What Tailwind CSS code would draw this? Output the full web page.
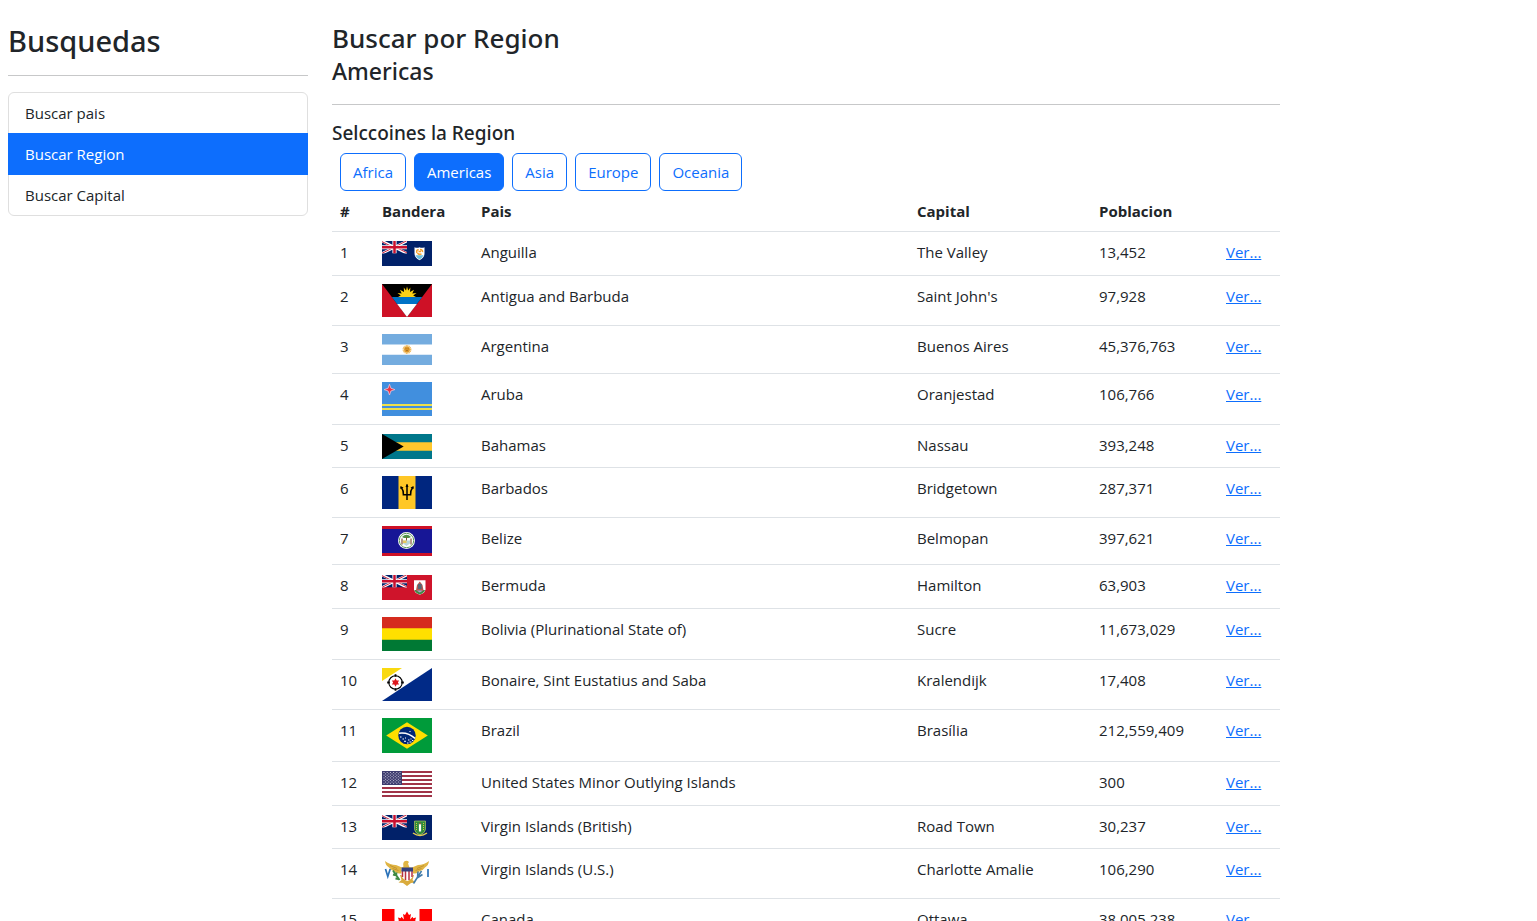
<!DOCTYPE html>
<html lang="es">
  <head>
    <meta charset="UTF-8" />
    <meta name="viewport" content="width=device-width, initial-scale=1.0" />
    <title>Paises</title>
    <script src="https://cdn.jsdelivr.net/npm/@tailwindcss/browser@4"></script>
  </head>
  <body class="bg-white text-[#212529] text-[15px] leading-6 font-['Open_Sans',sans-serif]">
    <!-- Shared shapes for the flags -->
    <svg class="hidden">
      <symbol id="union-jack" viewBox="0 0 60 30">
        <path d="M0 0h60v30H0z" fill="#012169" />
        <path d="M0 0l60 30M60 0L0 30" stroke="#fff" stroke-width="6" />
        <path d="M0 1.5L29 16M31 14L60 28.5M60 -1L31 14M29 15L0 29.5" stroke="#c8102e" stroke-width="2.2" />
        <path d="M30 0v30M0 15h60" stroke="#fff" stroke-width="10" />
        <path d="M30 0v30M0 15h60" stroke="#c8102e" stroke-width="6" />
      </symbol>
    </svg>

    <div class="max-w-[1280px] grid grid-cols-12 gap-6 pt-[22px] pl-2">
      <!-- Sidebar -->
      <aside class="col-span-3">
        <h1 class="text-[29px] leading-[37px] font-medium font-['Noto_Sans',sans-serif]">Busquedas</h1>
        <hr class="my-4 border-[#c7c8c9]" />
        <nav class="flex flex-col rounded-md border border-[#dfdfdf]">
          <a href="#" class="px-4 py-2">Buscar pais</a>
          <a href="#" class="-mx-px px-[17px] py-[9px] bg-[#0d6efd] text-white" aria-current="page">Buscar Region</a>
          <a href="#" class="px-4 py-2">Buscar Capital</a>
        </nav>
      </aside>

      <!-- Content -->
      <main class="col-span-9">
        <h2 class="text-[26px] leading-[33px] font-medium font-['Noto_Sans',sans-serif]">
          Buscar por Region
          <span class="block text-[23px]">Americas</span>
        </h2>
        <hr class="my-4 border-[#c7c8c9]" />

        <h3 class="text-[19px] leading-6 mb-2 font-medium font-['Noto_Sans',sans-serif]">Selccoines la Region</h3>
        <div class="flex gap-2 pl-2">
          <button type="button" class="rounded-md border border-[#0d6efd] px-3 py-1.5 text-[#0d6efd]">Africa</button>
          <button type="button" class="rounded-md border border-[#0d6efd] px-3 py-1.5 bg-[#0d6efd] text-white">Americas</button>
          <button type="button" class="rounded-md border border-[#0d6efd] px-3 py-1.5 text-[#0d6efd]">Asia</button>
          <button type="button" class="rounded-md border border-[#0d6efd] px-3 py-1.5 text-[#0d6efd]">Europe</button>
          <button type="button" class="rounded-md border border-[#0d6efd] px-3 py-1.5 text-[#0d6efd]">Oceania</button>
        </div>

        <table class="w-full table-fixed text-left align-top [&_th]:p-2 [&_td]:p-2 [&_td]:align-top [&_tr]:border-b [&_tr]:border-[#dee2e6] [&_a]:text-[#0d6efd] [&_a]:underline [&_svg]:inline-block [&_svg]:w-[50px] [&_svg]:align-middle">
          <thead>
            <tr>
              <th class="w-[42px]">#</th>
              <th class="w-[99px]">Bandera</th>
              <th>Pais</th>
              <th class="w-[182px]">Capital</th>
              <th class="w-[127px]">Poblacion</th>
              <th class="w-[62px]"></th>
            </tr>
          </thead>
          <tbody>
            <tr class="h-11">
              <td>1</td>
              <td>
                <svg class="h-[25px]" viewBox="0 0 50 25" role="img" aria-label="Anguilla">
                  <path d="M0 0h50v25H0z" fill="#012169" />
                  <use href="#union-jack" width="25" height="12.5" />
                  <path d="M32.5 6.3q2.5 1 5 0q2.500 1 5 0v6q0 4.500-5 7q-5-2.500-5-7z" fill="#fff" />
                  <path d="M33.400 14.300h8.200q-1.300 2.700-4.100 4.200q-2.800-1.500-4.100-4.200z" fill="#6bbfdf" />
                  <path d="M35 12q-1-3.500 1.700-3.300M38 8.500q3 0 2.400 2.700M39.500 12.800q-2.700 1.400-4-.6M36.500 10.500h2.500" fill="none" stroke="#f5a02c" stroke-width="1.500" />
                </svg>
              </td>
              <td>Anguilla</td>
              <td>The Valley</td>
              <td>13,452</td>
              <td><a href="#">Ver...</a></td>
            </tr>
            <tr>
              <td>2</td>
              <td>
                <svg class="h-[33px]" viewBox="0 0 50 33" role="img" aria-label="Antigua and Barbuda">
                  <path d="M0 0h50v33H0z" fill="#ce1126" />
                  <path d="M0 0h50L25 33z" fill="#000" />
                  <path d="M16 13l2.800-1.500L15.500 9l4.200.6L18 5.800l4 2.200-.2-4.400 2.200 3L25 2.500l1.200 4.100 2.200-3L28 8l4-2.200-1.700 3.800 4.200-.6-3.300 2.500L34 13z" fill="#fcd116" />
                  <path d="M9.800 13h30.400l-5.300 7H15.100z" fill="#0072c6" />
                  <path d="M15.100 20h19.800L25 33z" fill="#fff" />
                </svg>
              </td>
              <td>Antigua and Barbuda</td>
              <td>Saint John's</td>
              <td>97,928</td>
              <td><a href="#">Ver...</a></td>
            </tr>
            <tr>
              <td>3</td>
              <td>
                <svg class="h-[31px]" viewBox="0 0 50 31" role="img" aria-label="Argentina">
                  <path d="M0 0h50v31H0z" fill="#74acdf" />
                  <path d="M0 10.400h50v10.300H0z" fill="#fff" />
                  <circle cx="25" cy="15.500" r="3.600" fill="none" stroke="#f0b858" stroke-width="1.600" stroke-dasharray="1 .4" />
                  <circle cx="25" cy="15.500" r="2.900" fill="#e09a2b" />
                  <path d="M23.500 14.800h1M25.600 14.800h1M24 16.600h2" stroke="#85501a" stroke-width=".6" />
                </svg>
              </td>
              <td>Argentina</td>
              <td>Buenos Aires</td>
              <td>45,376,763</td>
              <td><a href="#">Ver...</a></td>
            </tr>
            <tr>
              <td>4</td>
              <td>
                <svg class="h-[34px]" viewBox="0 0 50 34" role="img" aria-label="Aruba">
                  <path d="M0 0h50v34H0z" fill="#418fde" />
                  <path d="M0 23h50M0 27h50" stroke="#ede04b" stroke-width="2" />
                  <path d="M7.500 2.200l1.400 4 4 1.400-4 1.400-1.400 4-1.400-4-4-1.400 4-1.400z" fill="#ef3340" stroke="#e9c3da" stroke-width=".8" />
                </svg>
              </td>
              <td>Aruba</td>
              <td>Oranjestad</td>
              <td>106,766</td>
              <td><a href="#">Ver...</a></td>
            </tr>
            <tr>
              <td>5</td>
              <td>
                <svg class="h-[25px]" viewBox="0 0 50 25" role="img" aria-label="Bahamas">
                  <path d="M0 0h50v25H0z" fill="#00778b" />
                  <path d="M0 8.300h50v8.400H0z" fill="#ffc72c" />
                  <path d="M0 0l21.700 12.500L0 25z" fill="#000" />
                </svg>
              </td>
              <td>Bahamas</td>
              <td>Nassau</td>
              <td>393,248</td>
              <td><a href="#">Ver...</a></td>
            </tr>
            <tr>
              <td>6</td>
              <td>
                <svg class="h-[33px]" viewBox="0 0 50 33" role="img" aria-label="Barbados">
                  <path d="M0 0h50v33H0z" fill="#00267f" />
                  <path d="M16.500 0h17v33h-17z" fill="#ffc726" />
                  <path d="M25 8.500v15.500M25 18.700h-3.600q.3-4-2-7.200M25 18.700h3.600q-.3-4 2-7.200" fill="none" stroke="#000" stroke-width="1.500" />
                  <path d="M25 7.800l-1.500 3.200h3zM18 12.700l.6-2.700 3 1.700zM32 12.700l-.6-2.700-3 1.700z" fill="#000" />
                </svg>
              </td>
              <td>Barbados</td>
              <td>Bridgetown</td>
              <td>287,371</td>
              <td><a href="#">Ver...</a></td>
            </tr>
            <tr>
              <td>7</td>
              <td>
                <svg class="h-[30px]" viewBox="0 0 50 30" role="img" aria-label="Belize">
                  <path d="M0 0h50v30H0z" fill="#ce1126" />
                  <path d="M0 3h50v24H0z" fill="#171696" />
                  <circle cx="24.500" cy="14.500" r="8.500" fill="#fff" />
                  <circle cx="24.500" cy="14.500" r="7.200" fill="none" stroke="#5f9b5c" stroke-width="1" />
                  <path d="M20 11q4.500-4.500 9 0l-2 1h-5z" fill="#4f9147" />
                  <path d="M24.500 11v4" stroke="#7b5a36" stroke-width="1" />
                  <path d="M21 14.500h7v3l-3.500 2.500-3.500-2.500z" fill="#b9d8d9" />
                  <path d="M21 14.500h3.500v2.500H21z" fill="#e6c85b" />
                  <path d="M20 12.500v6M29 12.500v6" stroke="#8c6245" stroke-width="1.300" />
                </svg>
              </td>
              <td>Belize</td>
              <td>Belmopan</td>
              <td>397,621</td>
              <td><a href="#">Ver...</a></td>
            </tr>
            <tr>
              <td>8</td>
              <td>
                <svg class="h-[25px]" viewBox="0 0 50 25" role="img" aria-label="Bermuda">
                  <path d="M0 0h50v25H0z" fill="#cf142b" />
                  <use href="#union-jack" width="25" height="12.5" />
                  <path d="M32 5.300h11.500v9q-.5 4-5.700 5.500q-5.300-1.500-5.800-5.500z" fill="#fff" />
                  <path d="M32.400 15h10.700q-1 3.300-5.300 4.400q-4.400-1.100-5.400-4.400z" fill="#3e8a45" />
                  <path d="M34 15.500l1-5.500 2.800-3.500 2.700 3.500 1 5.500-3.700 2z" fill="#b5564f" />
                  <path d="M36 9h3.600v5H36z" fill="#546776" />
                  <path d="M34.800 15.500h6l-3 2z" fill="#88b6d9" />
                </svg>
              </td>
              <td>Bermuda</td>
              <td>Hamilton</td>
              <td>63,903</td>
              <td><a href="#">Ver...</a></td>
            </tr>
            <tr>
              <td>9</td>
              <td>
                <svg class="h-[34px]" viewBox="0 0 50 34" role="img" aria-label="Bolivia">
                  <path d="M0 0h50v34H0z" fill="#ffe000" />
                  <path d="M0 0h50v11.300H0z" fill="#d52b1e" />
                  <path d="M0 22.700h50V34H0z" fill="#007934" />
                </svg>
              </td>
              <td>Bolivia (Plurinational State of)</td>
              <td>Sucre</td>
              <td>11,673,029</td>
              <td><a href="#">Ver...</a></td>
            </tr>
            <tr>
              <td>10</td>
              <td>
                <svg class="h-[33px]" viewBox="0 0 50 33" role="img" aria-label="Bonaire, Sint Eustatius and Saba">
                  <path d="M0 0h50v33H0z" fill="#fff" />
                  <path d="M50 0v33H0z" fill="#012a87" />
                  <path d="M0 0h20L0 13z" fill="#f9d90f" />
                  <circle cx="13.500" cy="14.500" r="6.700" fill="#fff" stroke="#000" stroke-width="1.100" />
                  <path d="M13.500 6.200v2.600M13.500 20.200v2.600M5.200 14.500h2.600M19.200 14.500h2.600" stroke="#000" stroke-width="1.800" />
                  <path d="M13.500 10.300l1.200 2.100h2.400l-1.200 2.100 1.200 2.100h-2.400l-1.200 2.100-1.200-2.100H9.900l1.200-2.100-1.200-2.100h2.400z" fill="#dc171d" />
                </svg>
              </td>
              <td>Bonaire, Sint Eustatius and Saba</td>
              <td>Kralendijk</td>
              <td>17,408</td>
              <td><a href="#">Ver...</a></td>
            </tr>
            <tr>
              <td>11</td>
              <td>
                <svg class="h-[35px]" viewBox="0 0 50 35" role="img" aria-label="Brazil">
                  <path d="M0 0h50v35H0z" fill="#009b3a" />
                  <path d="M4.200 17.500L25 4.200l20.800 13.300L25 30.800z" fill="#fedf00" />
                  <circle cx="25" cy="17.500" r="8.700" fill="#002776" />
                  <path d="M17 15.200q9-1.300 16 5.200" fill="none" stroke="#fff" stroke-width="1.600" />
                  <path d="M18 19h1.500M20.500 21h1.500M23 20h1M22 23.300h2M26 22h1.500M28.500 21h1M27.500 24h2M30 22.500h1.300M27.500 13.500h1M25 25h1.500" stroke="#fff" stroke-width="1.100" />
                </svg>
              </td>
              <td>Brazil</td>
              <td>Brasília</td>
              <td>212,559,409</td>
              <td><a href="#">Ver...</a></td>
            </tr>
            <tr>
              <td>12</td>
              <td>
                <svg class="h-[26px]" viewBox="0 0 50 26" role="img" aria-label="United States Minor Outlying Islands">
                  <path d="M0 0h50v26H0z" fill="#fff" />
                  <path d="M0 1h50M0 5h50M0 9h50M0 13h50M0 17h50M0 21h50M0 25h50" stroke="#a03448" stroke-width="2" />
                  <path d="M0 0h20v14H0z" fill="#3c3b6e" />
                  <path d="M1.500 1.500h18M1.500 4.200h18M1.500 6.900h18M1.500 9.600h18M1.500 12.300h18" stroke="#d5d5e3" stroke-width=".9" stroke-dasharray="1 2.200" />
                  <path d="M3.100 2.900h15M3.100 5.600h15M3.100 8.300h15M3.100 11h15" stroke="#d5d5e3" stroke-width=".9" stroke-dasharray="1 2.200" />
                </svg>
              </td>
              <td>United States Minor Outlying Islands</td>
              <td></td>
              <td>300</td>
              <td><a href="#">Ver...</a></td>
            </tr>
            <tr>
              <td>13</td>
              <td>
                <svg class="h-[25px]" viewBox="0 0 50 25" role="img" aria-label="Virgin Islands (British)">
                  <path d="M0 0h50v25H0z" fill="#012169" />
                  <use href="#union-jack" width="25" height="12.5" />
                  <path d="M32.500 6h11v8.500q-.5 3.500-5.500 5.500q-5-2-5.500-5.500z" fill="#2f8a3d" stroke="#c8cf6a" stroke-width=".6" />
                  <path d="M38 8.500v8" stroke="#fff" stroke-width="2.200" />
                  <circle cx="38" cy="8.500" r="1" fill="#8d5a3a" />
                  <path d="M34.500 8v8M41.500 8v8" stroke="#d9c63c" stroke-width="1" stroke-dasharray="1 1" />
                  <path d="M31 18q7 5 14 0" fill="none" stroke="#e3cf52" stroke-width="1.400" />
                </svg>
              </td>
              <td>Virgin Islands (British)</td>
              <td>Road Town</td>
              <td>30,237</td>
              <td><a href="#">Ver...</a></td>
            </tr>
            <tr>
              <td>14</td>
              <td>
                <svg class="h-[33px]" viewBox="0 0 50 33" role="img" aria-label="Virgin Islands (U.S.)">
                  <path d="M18 18h14l-1.500 5 3 2.500-4.500.5-4 3-4-3-4.500-.5 3-2.500z" fill="#d9ab3c" />
                  <path d="M3 4q5 3.800 11 4l6 2.500 1.500-1q-1-3.500 1-5.200q2.500-1.300 4.500.8l-1 1.400 1.500 4 2.500 0 6-2.500q6-.2 11-4q-.5 4.500-4 6.500q-2 3-5 3.500q-2 2.500-5 2.500H17q-3-.3-5-2.500q-3-.5-5-3.500Q3.500 8.500 3 4z" fill="#e0b544" />
                  <path d="M8 8.500l7 3M10.500 11.500l6 2M42 8.500l-7 3M39.500 11.500l-6 2" stroke="#b98b2c" stroke-width=".8" />
                  <path d="M19.500 11h11.500v7q-.5 4-5.700 6q-5.300-2-5.800-6z" fill="#fff" />
                  <path d="M20.500 13v7M23.500 13v10M27 13v10M30 13v7" stroke="#b83240" stroke-width="1.500" />
                  <path d="M19.500 10.500h11.500v4H19.500z" fill="#34407f" />
                  <path d="M3.500 12l2.300 7.500 2.400-7.500M46 12v8" fill="none" stroke="#2b72b8" stroke-width="1.700" />
                  <path d="M11 13.500l6.500 9.500M11 17.500l2.800.8M14.500 15.500l-.3 3M13.500 21.500l3 .5" stroke="#3f8a42" stroke-width="1.900" />
                  <path d="M39.500 14L31.500 26.500M36 14.500l-.5 6M40.500 17.500l-5.500 3.500" stroke="#427ca9" stroke-width="1.600" />
                </svg>
              </td>
              <td>Virgin Islands (U.S.)</td>
              <td>Charlotte Amalie</td>
              <td>106,290</td>
              <td><a href="#">Ver...</a></td>
            </tr>
            <tr>
              <td>15</td>
              <td>
                <svg class="h-[25px]" viewBox="0 0 50 25" role="img" aria-label="Canada">
                  <path d="M0 0h50v25H0z" fill="#fff" />
                  <path d="M0 0h12.500v25H0zM37.500 0H50v25H37.500z" fill="#f00" />
                  <path d="M25 2.500l-2 3.600-2-1 1 5.300-2.600-2.600-.6 1.400-2.900-.6 1 3-1.200.6 4.700 4-.6 1.600 4.700-.8-.2 5h1.400l-.2-5 4.700.8-.6-1.600 4.700-4-1.200-.6 1-3-2.900.6-.6-1.400-2.600 2.600 1-5.300-2 1z" fill="#f00" />
                </svg>
              </td>
              <td>Canada</td>
              <td>Ottawa</td>
              <td>38,005,238</td>
              <td><a href="#">Ver...</a></td>
            </tr>
          </tbody>
        </table>
      </main>
    </div>
  </body>
</html>
